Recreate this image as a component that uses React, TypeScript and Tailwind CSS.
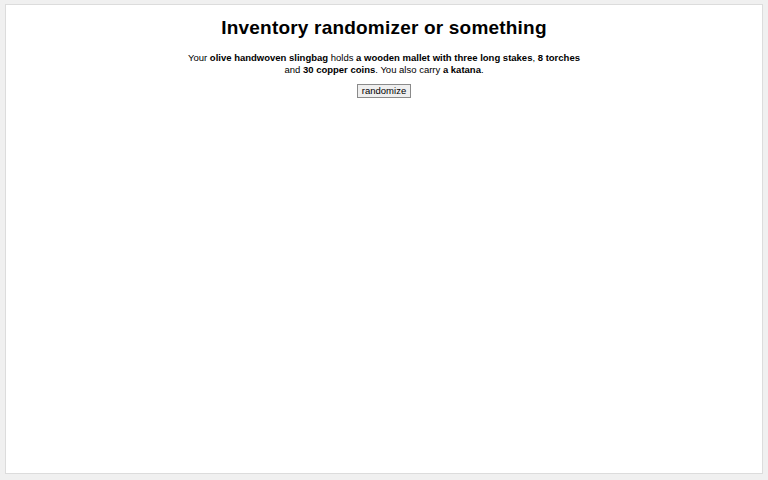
import React, { useState } from 'react';

const bags = ['olive handwoven slingbag'];

export default function App() {
  const [n, setN] = useState(0);

  return (
    <div className="min-h-[480px] bg-[#f0f0f0] p-[4px_5px_6px_5px] font-['Liberation_Sans',Arial,sans-serif] text-black">
      <div className="h-[470px] border border-[#dcdcdc] bg-white">
        <h1 className="mt-[11px] text-center text-[19px] font-bold leading-[24px] tracking-[0.2px]">Inventory randomizer or something</h1>
        <p className="mx-auto mt-[12px] w-[400px] text-center text-[9.5px] leading-[12px]">
          Your <b>{bags[n % bags.length]}</b> holds <b>a wooden mallet with three long stakes</b>, <b>8 torches</b> and <b>30 copper coins</b>. You also carry <b>a katana</b>.
        </p>
        <div className="mt-[8px] flex justify-center">
          <button
            onClick={() => setN(n + 1)}
            className="h-[14px] border border-[#8a8a8a] bg-[#efefef] px-[4px] text-[9.5px] leading-[12px]"
          >
            randomize
          </button>
        </div>
      </div>
    </div>
  );
}
